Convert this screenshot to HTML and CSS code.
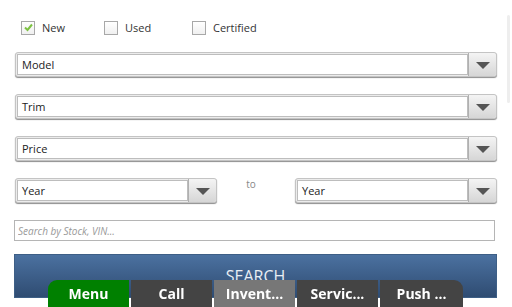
FILE: index.html
```html
<!DOCTYPE html>
<html lang="en">
<head>
  <meta charset="UTF-8" />
  <meta name="viewport" content="width=device-width, initial-scale=1.0"/>
  <title>Inventory Search</title>
  <link rel="stylesheet" href="styles.css">
</head>
<body>
  <div class="page">
    <!-- Condition -->
    <div class="conditions">
      <label class="cond">
        <span class="box checked">
          <svg width="11" height="11" viewBox="0 0 11 11"><path d="M2 5.5 L4.5 8 L9 2.5" fill="none" stroke="#7dc242" stroke-width="2"/></svg>
        </span>
        New
      </label>
      <label class="cond"><span class="box"></span>Used</label>
      <label class="cond"><span class="box"></span>Certified</label>
    </div>

    <!-- Selects -->
    <div class="select">
      <div class="select-value">Model</div>
      <div class="select-btn"><span class="arrow"></span></div>
    </div>
    <div class="select">
      <div class="select-value">Trim</div>
      <div class="select-btn"><span class="arrow"></span></div>
    </div>
    <div class="select">
      <div class="select-value">Price</div>
      <div class="select-btn"><span class="arrow"></span></div>
    </div>

    <div class="year-row">
      <div class="select half">
        <div class="select-value">Year</div>
        <div class="select-btn"><span class="arrow"></span></div>
      </div>
      <div class="to">to</div>
      <div class="select half">
        <div class="select-value">Year</div>
        <div class="select-btn"><span class="arrow"></span></div>
      </div>
    </div>

    <input class="search-input" type="text" placeholder="Search by Stock, VIN..." />

    <button class="search-btn">SEARCH</button>
  </div>

  <div class="scrollbar"></div>

  <!-- Bottom tabs -->
  <nav class="tabbar">
    <a class="tab menu">Menu</a>
    <a class="tab">Call</a>
    <a class="tab active">Invent...</a>
    <a class="tab">Servic...</a>
    <a class="tab last">Push ...</a>
  </nav>
</body>
</html>
```

FILE: styles.css
```css
body {
  margin: 0;
  padding: 0;
  background: #fff;
  font-family: 'Open Sans', 'Noto Sans', sans-serif;
  color: #222;
  overflow: hidden;
}

.page {
  padding: 20px 15px 0 15px;
  width: 482px;
}

.conditions {
  display: flex;
  height: 15px;
  align-items: center;
  margin-left: 6px;
  margin-bottom: 17px;
}

.cond {
  display: flex;
  align-items: center;
  font-size: 11px;
  color: #333;
}

.cond:nth-child(1) { width: 83px; }
.cond:nth-child(2) { width: 88px; }

.box {
  width: 12px;
  height: 12px;
  border: 1px solid #a8a8a8;
  background: linear-gradient(#fff, #f0f0f0);
  margin-right: 7px;
  display: flex;
  align-items: center;
  justify-content: center;
}

.select {
  display: flex;
  box-sizing: border-box;
  height: 25px;
  border: 1px solid #c4c4c4;
  border-radius: 3px;
  box-shadow: 0 1px 1px rgba(0,0,0,0.45);
  margin-bottom: 17px;
  background: #ececec;
  padding: 1px 0 1px 1px;
}

.select-value {
  flex: 1;
  background: #fff;
  border: 1px solid #bdbdbd;
  font-size: 11px;
  line-height: 19px;
  padding-left: 4px;
  color: #222;
}

.select-btn {
  width: 27px;
  border-left: 1px solid #b0b0b0;
  background: linear-gradient(#f4f4f4, #d6d6d6);
  display: flex;
  align-items: center;
  justify-content: center;
  margin: -1px 0;
  border-radius: 0 3px 3px 0;
}

.arrow {
  width: 0;
  height: 0;
  border-left: 7px solid transparent;
  border-right: 7px solid transparent;
  border-top: 7px solid #555;
  margin-top: 2px;
}

.year-row {
  display: flex;
  justify-content: space-between;
  align-items: flex-start;
}

.half {
  width: 202px;
}

.to {
  font-size: 10px;
  color: #888;
  margin-top: -1px;
  margin-right: 10px;
}

.search-input {
  display: block;
  width: 481px;
  height: 21px;
  margin: 0 0 0 -1px;
  box-sizing: border-box;
  border: 1px solid #b5b5b5;
  font-family: 'Open Sans', 'Noto Sans', sans-serif;
  font-size: 10px;
  padding: 0 3px;
}

.search-input::placeholder {
  color: #999;
  font-style: italic;
}

.search-btn {
  display: block;
  width: 483px;
  height: 44px;
  margin: 13px 0 0 -1px;
  border: 1px solid #3e5f86;
  background: linear-gradient(#4b71a0, #2f4c72);
  color: #e9eef4;
  font-family: 'Open Sans', 'Noto Sans', sans-serif;
  font-size: 16px;
  padding: 0;
}

.scrollbar {
  position: absolute;
  left: 507px;
  top: 15px;
  width: 3px;
  height: 88px;
  background: #eee;
  border-radius: 2px;
}

.tabbar {
  position: fixed;
  left: 48px;
  bottom: 0;
  display: flex;
  gap: 2px;
  height: 27px;
}

.tab {
  width: 81px;
  background: #444;
  color: #fff;
  font-family: 'Open Sans', 'Noto Sans', sans-serif;
  font-weight: bold;
  font-size: 14px;
  line-height: 28px;
  text-align: center;
}

.tab.menu {
  background: #008000;
  border-top-left-radius: 9px;
}

.tab.active {
  background: #777;
}

.tab.last {
  width: 83px;
  border-top-right-radius: 9px;
}
```
